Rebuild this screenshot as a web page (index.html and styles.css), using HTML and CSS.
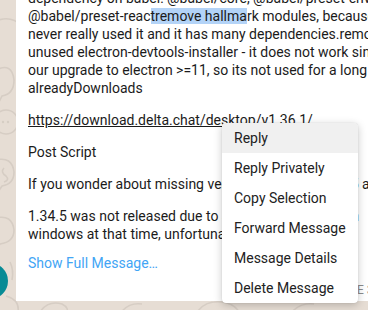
FILE: index.html
```html
<!DOCTYPE html>
<html>
<head>
<meta charset="utf-8">
<link rel="stylesheet" href="styles.css">
</head>
<body>
<svg class="pattern" width="368" height="310" viewBox="0 0 368 310" fill="none" stroke="#d6cdc4" stroke-width="1.6">
  <path d="M-6 22 Q10 14 22 26 L30 22 M22 26 L26 34"/>
  <path d="M-4 70 Q12 62 14 80 Q14 94 2 96 L-2 104 L-4 96"/>
  <circle cx="6" cy="122" r="12"/>
  <circle cx="3" cy="122" r="1.2" fill="#d6cdc4" stroke="none"/>
  <circle cx="8" cy="122" r="1.2" fill="#d6cdc4" stroke="none"/>
  <path d="M-4 160 Q12 156 14 172 Q14 184 2 186 L-2 192"/>
  <path d="M4 168 Q0 172 6 176 Q10 180 4 182"/>
  <path d="M-4 218 Q12 214 14 230 Q14 242 0 244 L-4 250"/>
  <path d="M10 262 Q14 270 12 280"/>
  <path d="M6 296 Q20 300 18 312"/>
  <path d="M40 312 Q48 300 62 304 Q70 308 66 314"/>
  <path d="M120 314 Q128 302 142 304"/>
  <path d="M196 314 Q204 300 222 302 Q236 304 240 314"/>
  <path d="M290 314 Q300 302 314 304"/>
</svg>
<div class="row">
  <div class="avatar"></div>
  <div class="bubble">
    <p>dependency on babel: @babel/core, @babel/preset-env, @babel/preset-typescript<br>@babel/preset-reac<span class="sel">tremove hallma</span>rk modules, because we<br>never really used it and it has many dependencies.remove<br>unused electron-devtools-installer - it does not work since<br>our upgrade to electron &gt;=11, so its not used for a long time<br>alreadyDownloads</p>
    <p><a class="url" href="#">https://download.delta.chat/desktop/v1.36.1/</a></p>
    <p>Post Script</p>
    <p>If you wonder about missing versions between 1.34.5 and 1.36.0:</p>
    <p class="last">1.34.5 was not released due to a broken build step on<br>windows at that time, unfortunately.</p>
    <div class="more">Show Full Message…</div>
    <div class="footer"><span class="meta">E 3:14 PM</span></div>
  </div>
</div>
<ul class="menu">
  <li class="active">Reply</li>
  <li>Reply Privately</li>
  <li>Copy Selection</li>
  <li>Forward Message</li>
  <li>Message Details</li>
  <li>Delete Message</li>
</ul>
</body>
</html>
```
FILE: styles.css
```css
html, body {
  margin: 0;
  padding: 0;
}
body {
  width: 368px;
  height: 310px;
  overflow: hidden;
  background: #e6ddd4;
  font-family: Roboto, "Liberation Sans", sans-serif;
  position: relative;
}
.pattern {
  position: absolute;
  left: 0;
  top: 0;
}
.row {
  position: relative;
  display: flex;
  align-items: flex-end;
  gap: 8px;
  margin-left: -28px;
  margin-top: -11px;
}
.avatar {
  width: 36px;
  height: 36px;
  border-radius: 50%;
  background: #078b95;
  flex: none;
  margin-bottom: 2px;
}
.bubble {
  background: #ffffff;
  width: 420px;
  flex: none;
  padding: 0 12px 2px 12px;
  font-size: 14px;
  line-height: 18px;
  color: #1b1b1b;
}
.bubble p {
  margin: 0 0 14px 0;
  white-space: nowrap;
}
.bubble p.last {
  margin-bottom: 11px;
}
.sel {
  background: #b3d3f7;
}
.url {
  color: #1b1b1b;
  text-decoration: underline;
}
.more {
  color: #42a5f5;
  font-size: 14px;
  line-height: 18px;
}
.footer {
  margin-top: 8px;
  padding-left: 329px;
  line-height: 18px;
}
.meta {
  font-size: 12px;
  color: #8d8d8d;
  white-space: nowrap;
}
.menu {
  position: absolute;
  left: 222px;
  top: 123px;
  width: 136px;
  margin: 0;
  padding: 0;
  list-style: none;
  background: #ffffff;
  border-radius: 4px;
  box-shadow: 0 2px 8px rgba(0, 0, 0, 0.22), 0 0 1px rgba(0, 0, 0, 0.2);
  overflow: hidden;
}
.menu li {
  height: 30px;
  line-height: 31px;
  padding: 0 12px;
  font-size: 14px;
  color: #222222;
  white-space: nowrap;
}
.menu li.active {
  background: #f0f0f0;
}
```
